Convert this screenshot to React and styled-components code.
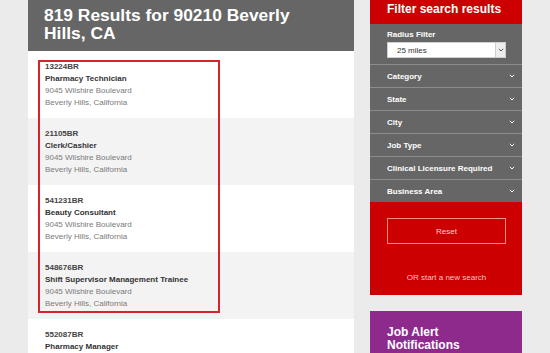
import React from 'react'
import styled, { createGlobalStyle } from 'styled-components'

const GlobalStyle = createGlobalStyle`
    body {
        margin: 0;
        background: #ebebeb;
        font-family: "Liberation Sans", Arial, sans-serif;
    }
`

const Page = styled.div`
    display: flex;
    align-items: flex-start;
    gap: 16px;
    padding-left: 28px;
    width: 550px;
    height: 353px;
    overflow: hidden;
    box-sizing: border-box;
`

const Main = styled.div`
    width: 326px;
    flex: none;
`

const Header = styled.div`
    background: #666666;
    color: #ffffff;
    padding: 6px 16px 9px;
    height: 51px;
    box-sizing: border-box;

    h1 {
        margin: 0;
        max-width: 262px;
        font-size: 17.4px;
        line-height: 18px;
        font-weight: 700;
    }
`

const List = styled.div`
    position: relative;
`

const Row = styled.div`
    height: 67px;
    box-sizing: border-box;
    padding: 10px 17px;
    background: ${ ( { $alt } ) => $alt ? '#f3f3f3' : '#ffffff' };
    font-size: 8px;
    line-height: 12px;
`

const JobId = styled.div`
    font-weight: 700;
    color: #444444;
`

const JobTitle = styled.div`
    font-weight: 700;
    color: #333333;
`

const Address = styled.div`
    color: #7a7a7a;
`

// highlight drawn over the first four results
const Highlight = styled.div`
    position: absolute;
    top: 9px;
    left: 10px;
    width: 182px;
    height: 253px;
    box-sizing: border-box;
    border: 2px solid #d8232a;
    pointer-events: none;
`

const Sidebar = styled.div`
    width: 152px;
    flex: none;
`

const FilterPanel = styled.div`
    background: #cc0000;
`

const FilterHeader = styled.div`
    color: #ffffff;
    font-size: 12px;
    font-weight: 700;
    line-height: 14px;
    height: 24px;
    box-sizing: border-box;
    padding: 2px 17px 0;
`

const RadiusBlock = styled.div`
    background: #666666;
    padding: 5px 16px 6px 17px;
    color: #ffffff;
`

const Label = styled.div`
    font-size: 8px;
    font-weight: 700;
    line-height: 12px;
    margin-bottom: 1px;
`

const Select = styled.div`
    display: flex;
    align-items: center;
    height: 16px;
    background: #ffffff;
    border: 1px solid #cfcfcf;
    box-sizing: border-box;
    color: #333333;
    font-size: 8px;

    span {
        flex: 1;
        padding-left: 9px;
    }
`

const SelectArrow = styled.div`
    width: 9px;
    height: 14px;
    display: flex;
    align-items: center;
    justify-content: center;
    background: #eeeeee;
    border-left: 1px solid #cfcfcf;
`

const FilterRow = styled.div`
    display: flex;
    align-items: center;
    justify-content: space-between;
    height: 23px;
    box-sizing: border-box;
    padding: 0 7px 0 17px;
    background: #666666;
    border-top: 1px solid #8c8c8c;
    color: #ffffff;
    font-size: 8px;
    font-weight: 700;
`

const ResetBlock = styled.div`
    display: flex;
    flex-direction: column;
    align-items: center;
    padding: 16px 16px 0 17px;
    height: 93px;
    box-sizing: border-box;
`

const ResetButton = styled.div`
    width: 100%;
    height: 26px;
    box-sizing: border-box;
    border: 1px solid #f08c8c;
    display: flex;
    align-items: center;
    justify-content: center;
    color: #f9d0d0;
    font-size: 8px;
`

const NewSearch = styled.div`
    margin-top: 29px;
    color: #f7c4c4;
    font-size: 8px;
`

const AlertCard = styled.div`
    margin-top: 16px;
    background: #8e2a8c;
    height: 60px;
    padding: 15px 17px 0;
    box-sizing: border-box;
    color: #ffffff;
    font-size: 12px;
    font-weight: 700;
    line-height: 13px;
`

const Chevron = ( { color = '#ffffff' } ) => (
    <svg width="6" height="4" viewBox="0 0 6 4">
        <polyline points="0.8,0.8 3,3 5.2,0.8" fill="none" stroke={ color } strokeWidth="1" />
    </svg>
)

const results = [
    { id: '13224BR', title: 'Pharmacy Technician' },
    { id: '21105BR', title: 'Clerk/Cashier' },
    { id: '541231BR', title: 'Beauty Consultant' },
    { id: '548676BR', title: 'Shift Supervisor Management Trainee' },
    { id: '552087BR', title: 'Pharmacy Manager' }
]

const filters = [ 'Category', 'State', 'City', 'Job Type', 'Clinical Licensure Required', 'Business Area' ]

export default function App() {
    return (
        <>
            <GlobalStyle />
            <Page>
                <Main>
                    <Header>
                        <h1>819 Results for 90210 Beverly Hills, CA</h1>
                    </Header>
                    <List>
                        { results.map( ( r, i ) => (
                            <Row key={ r.id } $alt={ i % 2 === 1 }>
                                <JobId>{ r.id }</JobId>
                                <JobTitle>{ r.title }</JobTitle>
                                <Address>9045 Wilshire Boulevard</Address>
                                <Address>Beverly Hills, California</Address>
                            </Row>
                        ) ) }
                        <Highlight />
                    </List>
                </Main>
                <Sidebar>
                    <FilterPanel>
                        <FilterHeader>Filter search results</FilterHeader>
                        <RadiusBlock>
                            <Label>Radius Filter</Label>
                            <Select>
                                <span>25 miles</span>
                                <SelectArrow><Chevron color="#555555" /></SelectArrow>
                            </Select>
                        </RadiusBlock>
                        { filters.map( f => (
                            <FilterRow key={ f }>
                                { f }
                                <Chevron />
                            </FilterRow>
                        ) ) }
                        <ResetBlock>
                            <ResetButton>Reset</ResetButton>
                            <NewSearch>OR start a new search</NewSearch>
                        </ResetBlock>
                    </FilterPanel>
                    <AlertCard>Job Alert<br />Notifications</AlertCard>
                </Sidebar>
            </Page>
        </>
    )
}
